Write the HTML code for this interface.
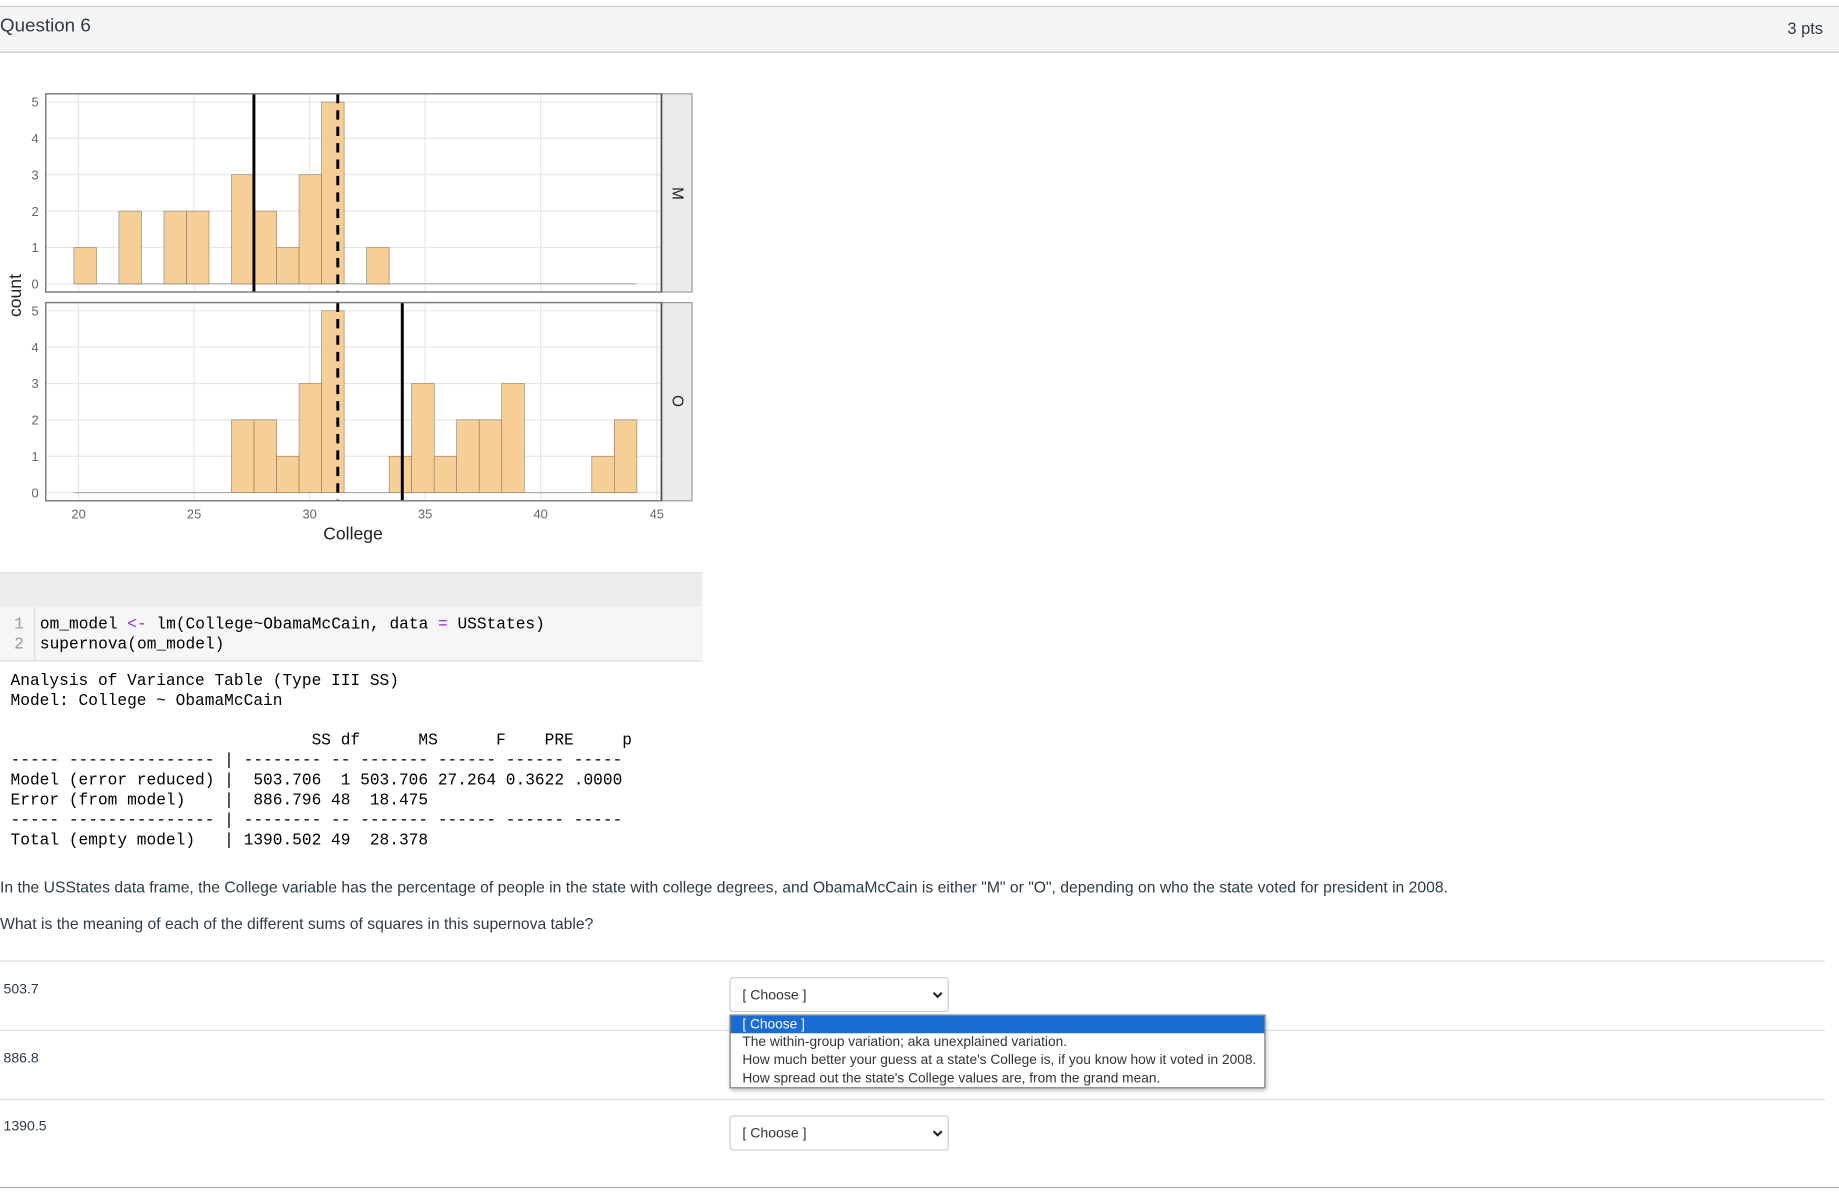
<!DOCTYPE html>
<html><head><meta charset="utf-8"><style>
html,body{margin:0;padding:0;background:#fff;width:1839px;height:1198px;overflow:hidden}
#w{position:absolute;left:0;top:0;width:1568px;height:1022px;transform:scale(1.17283);transform-origin:0 0;font-family:"Liberation Sans",sans-serif;color:#2d3b45}
.a{position:absolute}
.mono{font-family:"Liberation Mono",monospace;font-size:13.8px;line-height:17px;white-space:pre;color:#000}
.kw{color:#9a2be0}
.sel{position:absolute;left:622px;width:187px;height:30px;border:1px solid #c7cdd1;border-radius:3px;background:#fff;font-size:12px;color:#333;box-sizing:border-box}
.sel span{position:absolute;left:10px;top:7px}
.sel svg{position:absolute;right:4px;top:11px}
.lbl{position:absolute;left:3px;font-size:12px;color:#2d3b45}
.hr{position:absolute;left:0;width:1556px;height:1px;background:#ddd}
</style></head><body><div id="w">
<div class="a" style="left:0;top:5px;width:1568px;height:38px;background:#f5f5f5;border-top:1px solid #c7cdd1;border-bottom:1px solid #c7cdd1"></div>
<div class="a" style="left:0;top:14px;font-size:16px;color:#2d3b45">Question 6</div>
<div class="a" style="left:1524px;top:16px;font-size:14px;color:#2d3b45">3 pts</div>

<svg class="a" style="left:0;top:0" width="600" height="470" viewBox="0 0 600 470">
<g font-family="Liberation Sans,sans-serif">
<rect x="39" y="80" width="525" height="169" fill="#fff"/>
<g stroke="#e6e6e6" stroke-width="1">
<line x1="39" x2="564" y1="242" y2="242"/><line x1="39" x2="564" y1="211" y2="211"/><line x1="39" x2="564" y1="180" y2="180"/><line x1="39" x2="564" y1="149" y2="149"/><line x1="39" x2="564" y1="118" y2="118"/><line x1="39" x2="564" y1="87" y2="87"/>
<line x1="67" x2="67" y1="80" y2="249"/><line x1="165.5" x2="165.5" y1="80" y2="249"/><line x1="264" x2="264" y1="80" y2="249"/><line x1="362.5" x2="362.5" y1="80" y2="249"/><line x1="461" x2="461" y1="80" y2="249"/><line x1="560" x2="560" y1="80" y2="249"/>
<line x1="39" x2="564" y1="420" y2="420"/><line x1="39" x2="564" y1="389" y2="389"/><line x1="39" x2="564" y1="358" y2="358"/><line x1="39" x2="564" y1="327" y2="327"/><line x1="39" x2="564" y1="296" y2="296"/><line x1="39" x2="564" y1="265" y2="265"/>
<line x1="67" x2="67" y1="258" y2="427"/><line x1="165.5" x2="165.5" y1="258" y2="427"/><line x1="264" x2="264" y1="258" y2="427"/><line x1="362.5" x2="362.5" y1="258" y2="427"/><line x1="461" x2="461" y1="258" y2="427"/><line x1="560" x2="560" y1="258" y2="427"/>
</g>
<line x1="63" x2="542" y1="242" y2="242" stroke="#aaa"/>
<line x1="63" x2="542" y1="420" y2="420" stroke="#aaa"/>
<g fill="#f5cf96" stroke="#8a7a60" stroke-width="0.5">
<rect x="63" y="211" width="19.2" height="31"/>
<rect x="101.4" y="180" width="19.2" height="62"/>
<rect x="139.8" y="180" width="19.2" height="62"/>
<rect x="159" y="180" width="19.2" height="62"/>
<rect x="197.4" y="149" width="19.2" height="93"/>
<rect x="216.6" y="180" width="19.2" height="62"/>
<rect x="235.8" y="211" width="19.2" height="31"/>
<rect x="255" y="149" width="19.2" height="93"/>
<rect x="274.2" y="87" width="19.2" height="155"/>
<rect x="312.6" y="211" width="19.2" height="31"/>
<rect x="197.4" y="358" width="19.2" height="62"/>
<rect x="216.6" y="358" width="19.2" height="62"/>
<rect x="235.8" y="389" width="19.2" height="31"/>
<rect x="255" y="327" width="19.2" height="93"/>
<rect x="274.2" y="265" width="19.2" height="155"/>
<rect x="331.8" y="389" width="19.2" height="31"/>
<rect x="351" y="327" width="19.2" height="93"/>
<rect x="370.2" y="389" width="19.2" height="31"/>
<rect x="389.4" y="358" width="19.2" height="62"/>
<rect x="408.6" y="358" width="19.2" height="62"/>
<rect x="427.8" y="327" width="19.2" height="93"/>
<rect x="504.6" y="389" width="19.2" height="31"/>
<rect x="523.8" y="358" width="19.2" height="62"/>
</g>
<line x1="216.5" x2="216.5" y1="80" y2="249" stroke="#000" stroke-width="2.5"/>
<line x1="288" x2="288" y1="80" y2="249" stroke="#000" stroke-width="2.5" stroke-dasharray="8,6"/>
<line x1="343" x2="343" y1="258" y2="427" stroke="#000" stroke-width="2.5"/>
<line x1="288" x2="288" y1="258" y2="427" stroke="#000" stroke-width="2.5" stroke-dasharray="8,6"/>
<rect x="39" y="80" width="525" height="169" fill="none" stroke="#777" stroke-width="1.2"/>
<rect x="39" y="258" width="525" height="169" fill="none" stroke="#777" stroke-width="1.2"/>
<rect x="564" y="80" width="26" height="169" fill="#ebebeb" stroke="#999"/>
<rect x="564" y="258" width="26" height="169" fill="#ebebeb" stroke="#999"/>
<line x1="564" x2="564" y1="80" y2="249" stroke="#555" stroke-width="1.5"/>
<line x1="564" x2="564" y1="258" y2="427" stroke="#555" stroke-width="1.5"/>
<text x="577" y="165" font-size="13" fill="#222" text-anchor="middle" dominant-baseline="middle" transform="rotate(90 577 165)">M</text>
<text x="577" y="342" font-size="13" fill="#222" text-anchor="middle" dominant-baseline="middle" transform="rotate(90 577 342)">O</text>
<g font-size="11" fill="#666" text-anchor="end">
<text x="33" y="246">0</text><text x="33" y="215">1</text><text x="33" y="184">2</text><text x="33" y="153">3</text><text x="33" y="122">4</text><text x="33" y="91">5</text>
<text x="33" y="424">0</text><text x="33" y="393">1</text><text x="33" y="362">2</text><text x="33" y="331">3</text><text x="33" y="300">4</text><text x="33" y="269">5</text>
</g>
<g font-size="11" fill="#666" text-anchor="middle">
<text x="67" y="442">20</text><text x="165.5" y="442">25</text><text x="264" y="442">30</text><text x="362.5" y="442">35</text><text x="461" y="442">40</text><text x="560" y="442">45</text>
</g>
<text x="301" y="460" font-size="15" fill="#222" text-anchor="middle">College</text>
<text x="14" y="252" font-size="15" fill="#222" text-anchor="middle" dominant-baseline="middle" transform="rotate(-90 14 252)">count</text>
</g>
</svg>

<div class="a" style="left:0;top:488px;width:599px;height:28px;background:#ececec;border-top:1px solid #ddd;border-bottom:1px solid #ddd"></div>
<div class="a" style="left:0;top:517px;width:599px;height:46px;background:#f6f6f6;border-bottom:1px solid #ddd"></div>
<div class="a" style="left:29px;top:517px;width:1px;height:46px;background:#ddd"></div>
<div class="a mono" style="left:12px;top:525px;color:#999">1
2</div>
<div class="a mono" style="left:34px;top:525px">om_model <span class="kw">&lt;-</span> lm(College~ObamaMcCain, data <span class="kw">=</span> USStates)
supernova(om_model)</div>
<div class="a mono" style="left:9px;top:573px">Analysis of Variance Table (Type III SS)
Model: College ~ ObamaMcCain

                               SS df      MS      F    PRE     p
----- --------------- | -------- -- ------- ------ ------ -----
Model (error reduced) |  503.706  1 503.706 27.264 0.3622 .0000
Error (from model)    |  886.796 48  18.475                     
----- --------------- | -------- -- ------- ------ ------ -----
Total (empty model)   | 1390.502 49  28.378                     </div>

<div class="a" style="left:0;top:749px;font-size:13.4px;white-space:nowrap">In the USStates data frame, the College variable has the percentage of people in the state with college degrees, and ObamaMcCain is either "M" or "O", depending on who the state voted for president in 2008.</div>
<div class="a" style="left:0;top:780px;font-size:13.4px;white-space:nowrap">What is the meaning of each of the different sums of squares in this supernova table?</div>

<div class="hr" style="top:819px"></div>
<div class="hr" style="top:878px"></div>
<div class="hr" style="top:937px"></div>
<div class="a" style="left:0;top:1012px;width:1568px;height:1px;background:#aaa"></div>
<div class="lbl" style="top:836px">503.7</div>
<div class="lbl" style="top:895px">886.8</div>
<div class="lbl" style="top:953px">1390.5</div>

<div class="sel" style="top:833px"><span>[ Choose ]</span><svg width="9" height="7" viewBox="0 0 9 7"><path d="M1 1.5 L4.5 5 L8 1.5" fill="none" stroke="#222" stroke-width="1.8"/></svg></div>
<div class="sel" style="top:951px"><span>[ Choose ]</span><svg width="9" height="7" viewBox="0 0 9 7"><path d="M1 1.5 L4.5 5 L8 1.5" fill="none" stroke="#222" stroke-width="1.8"/></svg></div>

<div class="a" style="left:622px;top:865px;width:455px;height:61px;border:1px solid #777;background:#fff;box-shadow:1px 2px 4px rgba(0,0,0,.3);font-size:11.7px;color:#333;line-height:15.3px">
<div style="background:#1b6bd4;color:#fff;padding-left:10px;height:15px">[ Choose ]</div>
<div style="padding-left:10px">The within-group variation; aka unexplained variation.</div>
<div style="padding-left:10px">How much better your guess at a state's College is, if you know how it voted in 2008.</div>
<div style="padding-left:10px">How spread out the state's College values are, from the grand mean.</div>
</div>
</div></body></html>
